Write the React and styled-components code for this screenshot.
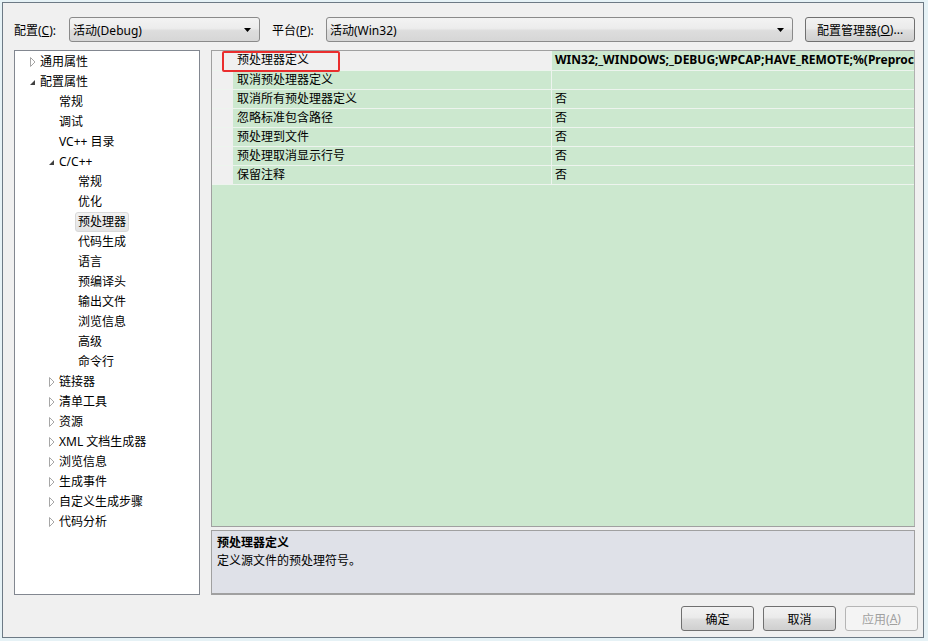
import React from 'react';
import styled, { createGlobalStyle } from 'styled-components';

const GlobalStyle = createGlobalStyle`
  html, body {
    margin: 0;
    padding: 0;
    background: #e6f2f6;
  }
  body {
    font-family: "Noto Sans", "Noto Sans CJK SC", sans-serif;
    font-size: 12px;
    color: #000;
  }
`;

const treeItems = [
  { label: '通用属性', level: 0, expander: 'closed' },
  { label: '配置属性', level: 0, expander: 'open' },
  { label: '常规', level: 1 },
  { label: '调试', level: 1 },
  { label: 'VC++ 目录', level: 1 },
  { label: 'C/C++', level: 1, expander: 'open' },
  { label: '常规', level: 2 },
  { label: '优化', level: 2 },
  { label: '预处理器', level: 2, selected: true },
  { label: '代码生成', level: 2 },
  { label: '语言', level: 2 },
  { label: '预编译头', level: 2 },
  { label: '输出文件', level: 2 },
  { label: '浏览信息', level: 2 },
  { label: '高级', level: 2 },
  { label: '命令行', level: 2 },
  { label: '链接器', level: 1, expander: 'closed' },
  { label: '清单工具', level: 1, expander: 'closed' },
  { label: '资源', level: 1, expander: 'closed' },
  { label: 'XML 文档生成器', level: 1, expander: 'closed' },
  { label: '浏览信息', level: 1, expander: 'closed' },
  { label: '生成事件', level: 1, expander: 'closed' },
  { label: '自定义生成步骤', level: 1, expander: 'closed' },
  { label: '代码分析', level: 1, expander: 'closed' },
];

const properties = [
  { name: '预处理器定义', value: 'WIN32;_WINDOWS;_DEBUG;WPCAP;HAVE_REMOTE;%(PreprocessorDefinitions)', bold: true, selected: true },
  { name: '取消预处理器定义', value: '' },
  { name: '取消所有预处理器定义', value: '否' },
  { name: '忽略标准包含路径', value: '否' },
  { name: '预处理到文件', value: '否' },
  { name: '预处理取消显示行号', value: '否' },
  { name: '保留注释', value: '否' },
];

function Expander({ state }) {
  if (state === 'open') {
    return (
      <ExpanderBox>
        <svg width="9" height="9" viewBox="0 0 9 9">
          <path d="M7 2 L7 7 L2 7 Z" fill="#404040" />
        </svg>
      </ExpanderBox>
    );
  }
  if (state === 'closed') {
    return (
      <ExpanderBox>
        <svg width="9" height="10" viewBox="0 0 9 10">
          <path d="M2.5 0.5 L7 5 L2.5 9.5 Z" fill="#fff" stroke="#a6a6a6" strokeWidth="1" />
        </svg>
      </ExpanderBox>
    );
  }
  return <ExpanderBox />;
}

function ComboArrow() {
  return (
    <svg width="7" height="4" viewBox="0 0 7 4">
      <path d="M0 0 L7 0 L3.5 4 Z" fill="#000" />
    </svg>
  );
}

function App() {
  return (
    <>
      <GlobalStyle />
      <Window>
        <TopBar>
          <FieldLabel $width={55}>配置(<u>C</u>):</FieldLabel>
          <Combo $width={191}>
            <span>活动(Debug)</span>
            <ComboArrow />
          </Combo>
          <FieldLabel $width={54} $gap>平台(<u>P</u>):</FieldLabel>
          <Combo $width={467}>
            <span>活动(Win32)</span>
            <ComboArrow />
          </Combo>
          <PushButton $width={110} $left={12}>配置管理器(<u>O</u>)...</PushButton>
        </TopBar>

        <Body>
          <Tree>
            {treeItems.map((item, i) => (
              <TreeRow key={i} $level={item.level}>
                <Expander state={item.expander} />
                <TreeLabel $selected={item.selected}>{item.label}</TreeLabel>
              </TreeRow>
            ))}
          </Tree>

          <RightPane>
            <Grid>
              {properties.map((p, i) => (
                <GridRow key={i}>
                  <Gutter />
                  <NameCell $selected={p.selected}>{p.name}</NameCell>
                  <ValueCell $bold={p.bold}>{p.value}</ValueCell>
                </GridRow>
              ))}
              <Highlight />
            </Grid>
            <Splitter />
            <Description>
              <DescTitle>预处理器定义</DescTitle>
              <DescText>定义源文件的预处理符号。</DescText>
            </Description>
          </RightPane>
        </Body>

        <ButtonBar>
          <PushButton $width={73}>确定</PushButton>
          <PushButton $width={73}>取消</PushButton>
          <PushButton $width={73} $disabled>应用(<u>A</u>)</PushButton>
        </ButtonBar>
      </Window>
    </>
  );
}

const Window = styled.div`
  margin: 2px 0 0 2px;
  width: 922px;
  height: 636px;
  box-sizing: border-box;
  border: 1px solid #6d7a85;
  background: #f0f0f0;
  display: flex;
  flex-direction: column;
  padding: 14px 0 0 11px;
`;

const TopBar = styled.div`
  display: flex;
  align-items: center;
  height: 25px;
`;

const FieldLabel = styled.span`
  margin-left: ${p => (p.$gap ? '12px' : '0')};
  width: ${p => p.$width}px;
  white-space: nowrap;
  u {
    text-decoration: underline;
  }
`;

const Combo = styled.div`
  width: ${p => p.$width}px;
  height: 25px;
  box-sizing: border-box;
  border: 1px solid #8a8a8a;
  border-radius: 3px;
  background: linear-gradient(#f3f3f3 0%, #ececec 45%, #dddddd 55%, #d6d6d6 100%);
  display: flex;
  align-items: center;
  justify-content: space-between;
  padding: 0 8px 0 3px;
`;

const PushButton = styled.div`
  margin-left: ${p => (p.$left !== undefined ? p.$left : 9)}px;
  width: ${p => p.$width}px;
  height: 25px;
  box-sizing: border-box;
  border: 1px solid ${p => (p.$disabled ? '#b5b5b5' : '#707070')};
  border-radius: 3px;
  background: ${p =>
    p.$disabled
      ? '#f4f4f4'
      : 'linear-gradient(#f2f2f2 0%, #ebebeb 45%, #dddddd 55%, #cfcfcf 100%)'};
  color: ${p => (p.$disabled ? '#a0a0a0' : '#000')};
  display: flex;
  align-items: center;
  justify-content: center;
  white-space: nowrap;
`;

const Body = styled.div`
  display: flex;
  margin-top: 8px;
  height: 545px;
`;

const Tree = styled.div`
  width: 184px;
  border: 1px solid #828790;
  background: #fff;
  padding-top: 1px;
`;

const TreeRow = styled.div`
  height: 20px;
  display: flex;
  align-items: center;
  padding-left: ${p => 12 + p.$level * 19}px;
`;

const ExpanderBox = styled.span`
  width: 13px;
  height: 20px;
  display: flex;
  align-items: center;
  justify-content: flex-start;
  padding-left: 1px;
  box-sizing: border-box;
`;

const TreeLabel = styled.span`
  height: 20px;
  line-height: 18px;
  padding: 0 2px;
  margin-left: -3px;
  box-sizing: border-box;
  border: 1px solid ${p => (p.$selected ? '#d9d9d9' : 'transparent')};
  border-radius: 3px;
  background: ${p => (p.$selected ? 'linear-gradient(#f2f2f2, #e3e3e3)' : 'transparent')};
  white-space: nowrap;
`;

const RightPane = styled.div`
  margin-left: 11px;
  width: 704px;
  display: flex;
  flex-direction: column;
`;

const Grid = styled.div`
  position: relative;
  flex: 1;
  display: flex;
  flex-direction: column;
  border: 1px solid #a0a0a0;
  border-bottom: none;
  border-right-color: #b0b0b0;
  background: #cce8cf;
  overflow: hidden;
`;

const GridRow = styled.div`
  display: flex;
  height: 19px;
  border-bottom: 1px solid #edf4ee;
  box-sizing: border-box;
  &:first-child {
    height: 20px;
  }
`;

const Gutter = styled.div`
  width: 21px;
  background: #f0f0f0;
`;

const NameCell = styled.div`
  width: 314px;
  padding-left: 4px;
  border-right: 1px solid #edf4ee;
  background: ${p => (p.$selected ? '#f0f0f0' : '#cce8cf')};
  line-height: 18px;
  white-space: nowrap;
`;

const ValueCell = styled.div`
  flex: 1;
  padding-left: 3px;
  line-height: 18px;
  white-space: nowrap;
  overflow: hidden;
  font-weight: ${p => (p.$bold ? 700 : 400)};
`;

const Highlight = styled.div`
  position: absolute;
  left: 10px;
  top: 0;
  width: 118px;
  height: 21px;
  border: 2px solid #ea2e2e;
  border-radius: 2px;
  box-sizing: border-box;
`;

const Splitter = styled.div`
  height: 3px;
  border-top: 1px solid #a0a0a0;
  border-bottom: 1px solid #a0a0a0;
  background: #f0f0f0;
`;

const Description = styled.div`
  height: 56px;
  background: #dfe1e8;
  border-left: 1px solid #a0a0a0;
  border-right: 1px solid #a0a0a0;
  border-bottom: 2px solid #a0a0a0;
  padding: 3px 5px;
`;

const DescTitle = styled.div`
  font-weight: 700;
  line-height: 18px;
`;

const DescText = styled.div`
  line-height: 18px;
`;

const ButtonBar = styled.div`
  display: flex;
  justify-content: flex-end;
  margin-top: 11px;
  padding-right: 5px;
`;

export default App;
